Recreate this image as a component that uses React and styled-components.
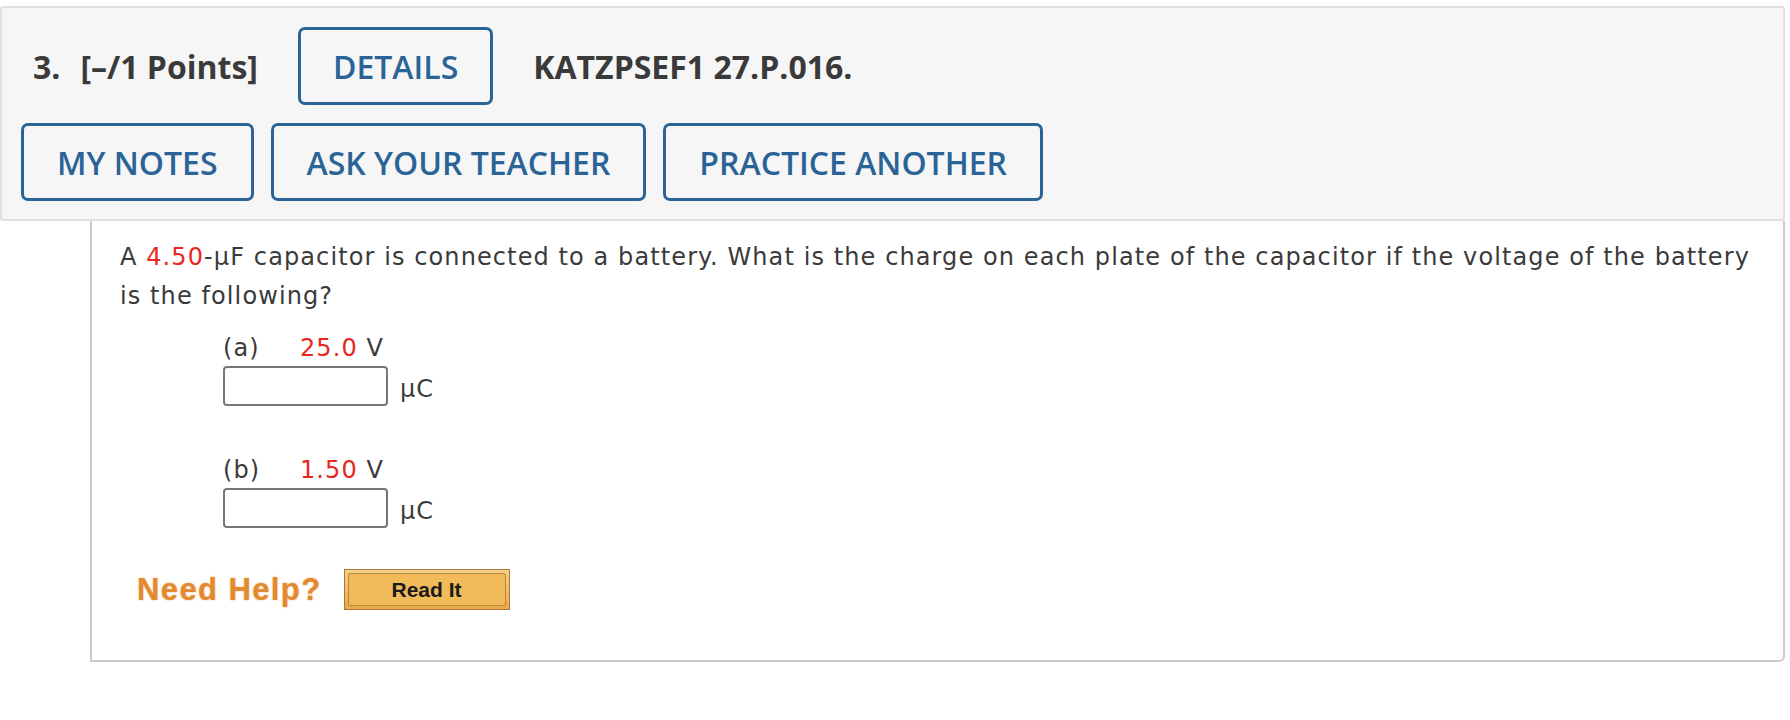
import React from "react";
import styled, { createGlobalStyle } from "styled-components";

const Global = createGlobalStyle`
  html, body { margin: 0; padding: 0; background: #fff; }
  body { font-family: "DejaVu Sans", Verdana, sans-serif; color: #3a3a3a; }
  * { box-sizing: border-box; }
`;

const Page = styled.div`
  padding-top: 6px;
  width: 1785px;
`;

const Header = styled.div`
  background: #f6f6f6;
  border: 2px solid #e0e0e0;
  border-radius: 3px;
  padding: 19px 0 18px 0;
  display: flex;
  flex-direction: column;
  gap: 18px;
`;

const Row = styled.div`
  display: flex;
  align-items: center;
  gap: ${(p) => p.$gap || 18}px;
  padding-left: ${(p) => p.$pl || 0}px;
`;

const Title = styled.div`
  font-family: "Open Sans", sans-serif;
  font-weight: 700;
  font-size: 32px;
  color: #3a3a3a;
  display: flex;
  gap: 20px;
  white-space: nowrap;
`;

const Btn = styled.button`
  font-family: "Open Sans", sans-serif;
  font-weight: 600;
  font-size: 32px;
  color: #2a6496;
  background: transparent;
  border: 3px solid #2a6496;
  border-radius: 7px;
  height: 78px;
  padding: 0 ${(p) => p.$px || 33}px;
  white-space: nowrap;
  cursor: pointer;
`;

const Content = styled.div`
  margin-left: 90px;
  border: 2px solid #cccccc;
  border-top: none;
  border-radius: 0 0 6px 0;
  padding: 17px 28px 50px 28px;
  letter-spacing: 1.1px;
`;

const Para = styled.p`
  margin: 0;
  font-size: 24px;
  line-height: 39px;
  color: #3a3a3a;
`;

const Red = styled.span`
  color: #e8281e;
`;

const Part = styled.div`
  margin-left: 103px;
  margin-top: ${(p) => p.$mt}px;
  display: flex;
  flex-direction: column;
  gap: 3px;
`;

const PartLabel = styled.div`
  display: flex;
  font-size: 24px;
  line-height: 30px;
`;

const Letter = styled.span`
  width: 77px;
`;

const AnswerRow = styled.div`
  display: flex;
  align-items: center;
  gap: 12px;
`;

const Input = styled.input`
  width: 165px;
  height: 40px;
  border: 2px solid #777;
  border-radius: 4px;
  background: #fff;
  font-size: 20px;
`;

const Unit = styled.span`
  font-size: 24px;
  line-height: 30px;
  padding-top: 6px;
`;

const HelpRow = styled.div`
  display: flex;
  align-items: center;
  gap: 22px;
  margin-top: 41px;
  margin-left: 17px;
  letter-spacing: normal;
`;

const NeedHelp = styled.span`
  font-family: "Liberation Sans", Arial, sans-serif;
  font-weight: 700;
  font-size: 31px;
  letter-spacing: 1.4px;
  color: #e38a30;
  text-shadow: 0 0 2px rgba(227, 138, 48, 0.7);
`;

const ReadIt = styled.button`
  width: 166px;
  height: 41px;
  padding: 3px;
  border: 1px solid #b07634;
  background: linear-gradient(#f6d28c, #e9a948);
  display: flex;
  cursor: pointer;
`;

const ReadItInner = styled.span`
  flex: 1;
  display: flex;
  align-items: center;
  justify-content: center;
  border: 1px solid #b9853f;
  border-radius: 2px;
  background: #f2bb59;
  font-family: "Liberation Sans", Arial, sans-serif;
  font-weight: 700;
  font-size: 21px;
  color: #1a1a1a;
`;

export default function App() {
  return (
    <Page>
      <Global />
      <Header>
        <Row $pl={31} $gap={40}>
          <Title>
            <span>3.</span>
            <span>[–/1 Points]</span>
          </Title>
          <Btn $px={32}>DETAILS</Btn>
          <Title>KATZPSEF1 27.P.016.</Title>
        </Row>
        <Row $pl={19} $gap={17}>
          <Btn>MY NOTES</Btn>
          <Btn>ASK YOUR TEACHER</Btn>
          <Btn>PRACTICE ANOTHER</Btn>
        </Row>
      </Header>
      <Content>
        <Para>
          A <Red>4.50</Red>-µF capacitor is connected to a battery. What is the charge on each plate of the
          capacitor if the voltage of the battery is the following?
        </Para>
        <Part $mt={17}>
          <PartLabel>
            <Letter>(a)</Letter>
            <span>
              <Red>25.0</Red> V
            </span>
          </PartLabel>
          <AnswerRow>
            <Input type="text" />
            <Unit>µC</Unit>
          </AnswerRow>
        </Part>
        <Part $mt={49}>
          <PartLabel>
            <Letter>(b)</Letter>
            <span>
              <Red>1.50</Red> V
            </span>
          </PartLabel>
          <AnswerRow>
            <Input type="text" />
            <Unit>µC</Unit>
          </AnswerRow>
        </Part>
        <HelpRow>
          <NeedHelp>Need Help?</NeedHelp>
          <ReadIt>
            <ReadItInner>Read It</ReadItInner>
          </ReadIt>
        </HelpRow>
      </Content>
    </Page>
  );
}
